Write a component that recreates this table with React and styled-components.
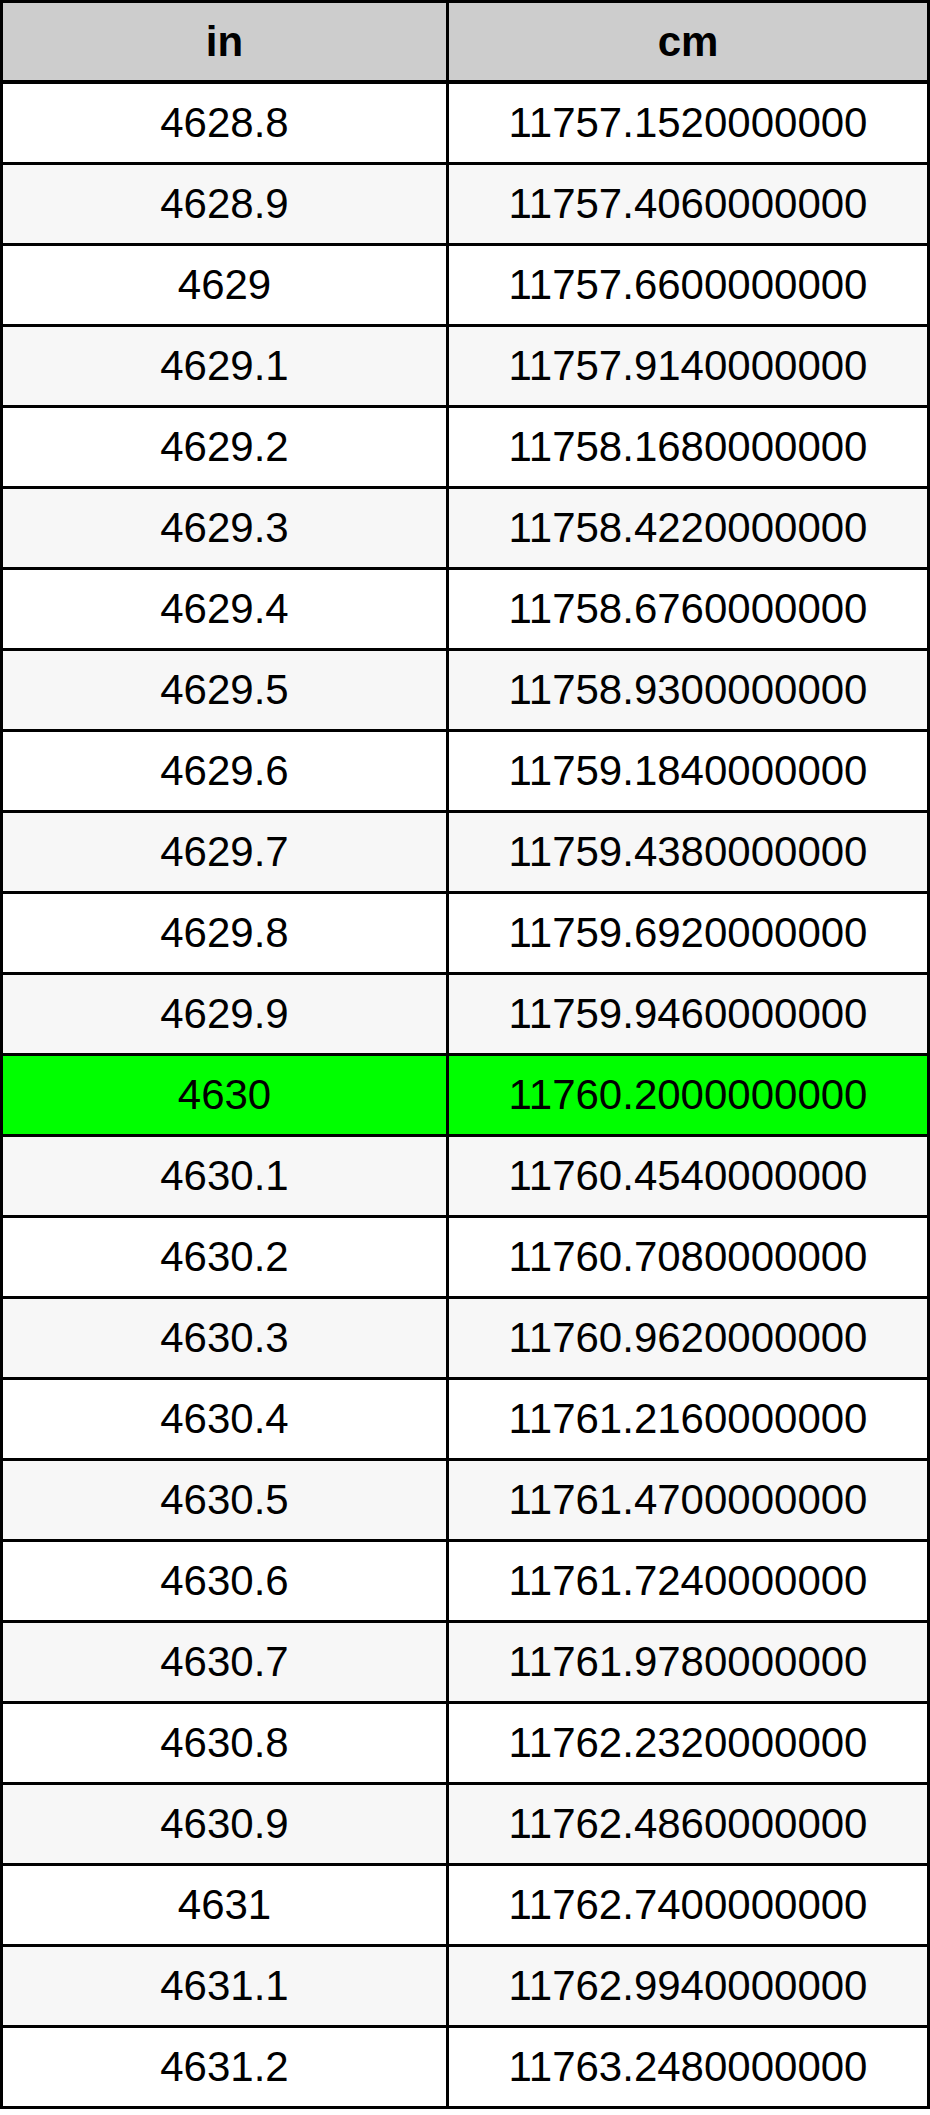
import React from "react";
import styled, { createGlobalStyle } from "styled-components";

const GlobalStyle = createGlobalStyle`
  html, body {
    margin: 0;
    padding: 0;
    background: #ffffff;
  }
`;

const Table = styled.div`
  display: grid;
  grid-template-columns: 443px 478px;
  grid-auto-rows: 78px;
  gap: 3px;
  padding: 3px;
  width: 930px;
  box-sizing: border-box;
  background: #000000;
  font-family: "Liberation Sans", Arial, sans-serif;
`;

const Cell = styled.div`
  display: flex;
  align-items: center;
  justify-content: center;
  font-size: 42px;
  color: #000000;
  font-weight: ${(p) => (p.$head ? 700 : 400)};
  background: ${(p) => p.$bg};
  ${(p) => p.$head && "height: 77px;"}
`;

const rows = [];
for (let t = 46288; t <= 46312; t++) {
  const inch = t % 10 === 0 ? String(t / 10) : (t / 10).toFixed(1);
  const milli = t * 254;
  const whole = Math.floor(milli / 1000);
  const frac = String(milli % 1000).padStart(3, "0");
  rows.push({ inch, cm: `${whole}.${frac}0000000`, hit: t === 46300 });
}

const App = () => {
  return (
    <>
      <GlobalStyle />
      <Table>
        <Cell $head $bg="#cdcdcd">in</Cell>
        <Cell $head $bg="#cdcdcd">cm</Cell>
        {rows.map((r, i) => {
          const bg = r.hit ? "#00ff00" : i % 2 ? "#f7f7f7" : "#ffffff";
          return (
            <React.Fragment key={r.inch}>
              <Cell $bg={bg}>{r.inch}</Cell>
              <Cell $bg={bg}>{r.cm}</Cell>
            </React.Fragment>
          );
        })}
      </Table>
    </>
  );
};

export default App;
